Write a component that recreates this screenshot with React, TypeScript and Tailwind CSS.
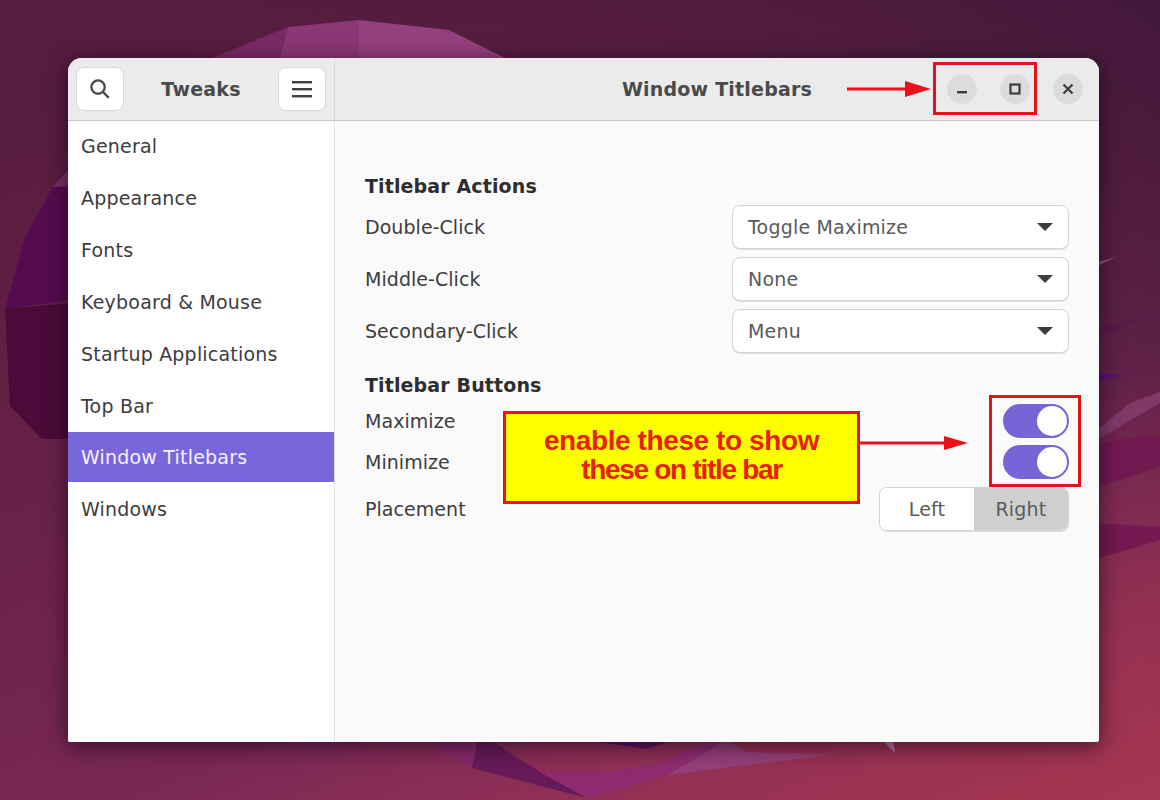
import React from "react";

const items = ["General", "Appearance", "Fonts", "Keyboard & Mouse", "Startup Applications", "Top Bar", "Window Titlebars", "Windows"];

function Wallpaper() {
  return (
    <svg className="absolute inset-0" width="1160" height="800" viewBox="0 0 1160 800">
      <defs>
        <linearGradient id="bg" x1="0.25" y1="0" x2="0.8" y2="1">
          <stop offset="0" stopColor="#571c3f" />
          <stop offset="0.45" stopColor="#6b2349" />
          <stop offset="0.8" stopColor="#7e2a58" />
          <stop offset="1" stopColor="#8a2c58" />
        </linearGradient>
        <linearGradient id="tr" x1="1" y1="0" x2="0.55" y2="0.4">
          <stop offset="0" stopColor="#42183a" stopOpacity="0.95" />
          <stop offset="1" stopColor="#42183a" stopOpacity="0" />
        </linearGradient>
        <linearGradient id="br" x1="1" y1="1" x2="0.75" y2="0.6">
          <stop offset="0" stopColor="#a43650" stopOpacity="1" />
          <stop offset="1" stopColor="#a43650" stopOpacity="0" />
        </linearGradient>
      </defs>
      <rect width="1160" height="800" fill="url(#bg)" />
      <rect width="1160" height="800" fill="url(#tr)" />
      <rect width="1160" height="800" fill="url(#br)" />
      <polygon points="207,60 288,27 279,60" fill="#7a2a66" />
      <polygon points="288,27 359,20 359,60 279,60" fill="#8c3676" />
      <polygon points="359,20 449,30 509,60 359,60" fill="#94407e" />
      <polygon points="70,300 70,172 53,187 25,237 5,309" fill="#560b50" />
      <polygon points="70,168 53,187 70,186" fill="#7c3068" />
      <polygon points="5,309 10,406 42,439 70,439 70,303" fill="#4b0a38" />
      <polygon points="440,740 478,740 472,768 440,752" fill="#842a68" />
      <polygon points="478,740 472,768 587,798 540,772 490,740" fill="#661a58" />
      <polygon points="540,772 587,798 667,775 707,752 725,740 700,745 660,763 607,772" fill="#8e2b70" />
      <polygon points="667,775 830,755 747,752 727,740 707,752" fill="#944078" />
      <polygon points="583,740 647,749 673,740" fill="#5c1460" />
      <polygon points="882,740 895,753 893,740" fill="#b57aa0" />
      <polygon points="1095,263 1116,257 1095,267" fill="#8d5a80" />
      <polygon points="1095,329 1160,312 1095,339" fill="#5a1a4a" />
      <polygon points="1095,373 1125,375 1095,382" fill="#5a1270" />
      <polygon points="1095,432 1130,403 1160,392 1160,403 1095,441" fill="#7f3a68" />
      <polygon points="1095,444 1147,435 1160,437 1160,467 1095,488" fill="#711a50" />
      <polygon points="1095,523 1160,527 1160,540 1117,553 1095,559" fill="#751a50" />
    </svg>
  );
}

function Combo({ text }: { text: string }) {
  return (
    <div className="flex h-[44px] w-[337px] items-center justify-between rounded-[8px] border border-[#d4d4d4] bg-white pl-[15px] pr-[15px] tracking-[0.2px] text-[#5a5a5a] shadow-[0_1px_0_#dedede]">
      <span>{text}</span>
      <svg width="16" height="8" viewBox="0 0 16 8"><polygon points="0,0 16,0 8,8" fill="#3d3d3d" /></svg>
    </div>
  );
}

function Toggle() {
  return (
    <div className="flex h-[34px] w-[66px] items-center justify-end rounded-full bg-[#7565d6] pr-[2px]">
      <div className="h-[30px] w-[30px] rounded-full bg-white" />
    </div>
  );
}

function Row({ label, children, className }: { label: string; children: React.ReactNode; className: string }) {
  return (
    <div className={"flex items-center justify-between " + className}>
      <span className="tracking-[0.05px]">{label}</span>
      {children}
    </div>
  );
}

export default function App() {
  return (
    <div
      className="relative h-[800px] w-[1160px] overflow-hidden pl-[68px] pt-[58px] text-[19px] leading-none tracking-[0.2px] text-[#3d3d3d]"
      style={{ fontFamily: '"DejaVu Sans", sans-serif' }}
    >
      <Wallpaper />
      <div className="relative flex h-[684px] w-[1031px] flex-col overflow-hidden rounded-t-[14px] rounded-b-[2px] bg-[#fafafa] shadow-[0_4px_22px_rgba(20,0,20,0.65)]">
        <header className="flex h-[63px] shrink-0 border-b border-[#c8c8c8] bg-[#ebebeb]">
          <div className="flex w-[267px] shrink-0 items-center justify-between border-r border-[#d8d8d8] pl-2 pr-2">
            <div className="flex h-[44px] w-[48px] items-center justify-center rounded-[8px] border border-[#d8d8d8] bg-white">
              <svg className="-translate-x-px -translate-y-px" width="21" height="21" viewBox="0 0 22 22" fill="none" stroke="#4a4a4a" strokeWidth="2.4" strokeLinecap="round">
                <circle cx="9.5" cy="9.5" r="7" />
                <path d="M14.8 14.8 L20 20" />
              </svg>
            </div>
            <span className="font-bold text-[#4a4a4a]">Tweaks</span>
            <div className="flex h-[44px] w-[48px] items-center justify-center rounded-[8px] border border-[#d8d8d8] bg-white">
              <svg width="20" height="18" viewBox="0 0 20 18" fill="#3f3f3f">
                <rect y="1" width="20" height="2.4" />
                <rect y="8" width="20" height="2.4" />
                <rect y="15" width="20" height="2.4" />
              </svg>
            </div>
          </div>
          <div className="grid flex-1 grid-cols-[1fr_auto_1fr] items-center">
            <div />
            <span className="font-bold text-[#4a4a4a]">Window Titlebars</span>
            <div className="flex justify-end gap-[23px] pr-4">
              <div className="flex h-[30px] w-[30px] items-center justify-center rounded-full bg-[#dcdcdc]">
                <svg width="12" height="12" viewBox="0 0 12 12"><rect x="1" y="8" width="10" height="2.4" fill="#3d3d3d" /></svg>
              </div>
              <div className="flex h-[30px] w-[30px] items-center justify-center rounded-full bg-[#dcdcdc]">
                <svg width="12" height="12" viewBox="0 0 12 12" fill="none"><rect x="1.5" y="1.5" width="9" height="9" stroke="#3d3d3d" strokeWidth="2.2" /></svg>
              </div>
              <div className="flex h-[30px] w-[30px] items-center justify-center rounded-full bg-[#dcdcdc]">
                <svg width="12" height="12" viewBox="0 0 12 12" stroke="#3d3d3d" strokeWidth="2.2"><path d="M1.5 1.5 L10.5 10.5 M10.5 1.5 L1.5 10.5" /></svg>
              </div>
            </div>
          </div>
        </header>
        <div className="flex min-h-0 flex-1">
          <nav className="w-[267px] shrink-0 border-r border-[#e4e4e4] bg-white">
            {items.map((t) => (
              <div
                key={t}
                className={
                  t === "Window Titlebars"
                    ? "mb-[1.85px] flex h-[50px] items-center bg-[#7966da] pl-[13px] text-[#f4f2ff]"
                    : "flex h-[51.85px] items-center pl-[13px]"
                }
              >
                {t}
              </div>
            ))}
          </nav>
          <main className="flex-1 pl-[30px] pr-[30px] pt-[55px]">
            <h2 className="h-[20px] font-bold leading-[20px] tracking-[0.13px] text-[#2e2e2e]">Titlebar Actions</h2>
            <Row label="Double-Click" className="mt-[9px]"><Combo text="Toggle Maximize" /></Row>
            <Row label="Middle-Click" className="mt-[8px]"><Combo text="None" /></Row>
            <Row label="Secondary-Click" className="mt-[8px]"><Combo text="Menu" /></Row>
            <h2 className="mt-[22px] h-[20px] font-bold leading-[20px] tracking-[0.13px] text-[#2e2e2e]">Titlebar Buttons</h2>
            <Row label="Maximize" className="mt-[9px]"><Toggle /></Row>
            <Row label="Minimize" className="mt-[7px]"><Toggle /></Row>
            <Row label="Placement" className="mt-[8px]">
              <div className="flex h-[44px] w-[190px] overflow-hidden rounded-[8px] border border-[#d4d4d4] tracking-[0.2px] text-[#5a5a5a] shadow-[0_1px_0_#dedede]">
                <div className="flex flex-1 items-center justify-center bg-white">Left</div>
                <div className="flex flex-1 items-center justify-center bg-[#cfcfcf]">Right</div>
              </div>
            </Row>
          </main>
        </div>
      </div>

      {/* annotations */}
      <div className="absolute left-[933px] top-[62px] h-[53px] w-[104px] border-[3px] border-[#e8101a]" />
      <div className="absolute left-[989px] top-[395px] h-[92px] w-[92px] border-[3px] border-[#e8101a]" />
      <div
        className="absolute left-[503px] top-[411px] flex h-[93px] w-[357px] flex-col items-center border-[3px] border-[#e8101a] bg-[#ffff00] pt-[12px] text-center text-[28px] font-bold leading-[29px] text-[#e8200f]"
        style={{ fontFamily: '"Liberation Sans", sans-serif' }}
      >
        <span className="tracking-[-0.4px]">enable these to show</span>
        <span className="tracking-[-1.3px]">these on title bar</span>
      </div>
      <svg className="absolute left-[845px] top-[78px]" width="88" height="22" viewBox="0 0 88 22">
        <rect x="2" y="9.5" width="62" height="3" fill="#e8101a" />
        <polygon points="60,3 86,11 60,19" fill="#e8101a" />
      </svg>
      <svg className="absolute left-[858px] top-[432px]" width="112" height="22" viewBox="0 0 112 22">
        <rect x="2" y="9.5" width="88" height="3" fill="#e8101a" />
        <polygon points="86,4 110,11 86,18" fill="#e8101a" />
      </svg>
    </div>
  );
}
